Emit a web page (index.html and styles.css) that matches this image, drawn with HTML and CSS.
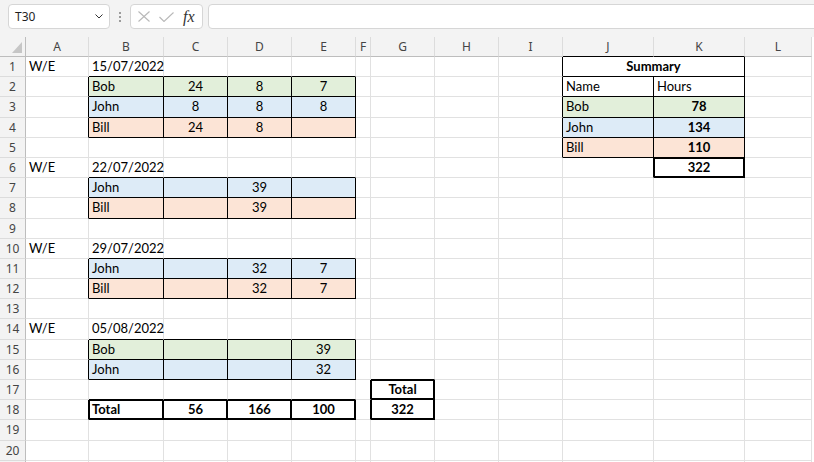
FILE: index.html
```html
<!DOCTYPE html>
<html>
<head>
<meta charset="utf-8">
<link rel="stylesheet" href="styles.css">
</head>
<body>
<div class="toolbar">
  <div class="namebox"><span>T30</span><svg width="8" height="5" viewBox="0 0 8 5"><path d="M0.5 0.5L4 4L7.5 0.5" fill="none" stroke="#333" stroke-width="1"/></svg></div>
  <div class="grip"><i></i><i></i><i></i></div>
  <div class="fxbox">
    <svg class="ix" width="12" height="11" viewBox="0 0 12 11"><path d="M0.5 0.5L11.5 10.5M11.5 0.5L0.5 10.5" fill="none" stroke="#b8b8b8" stroke-width="1.1"/></svg>
    <svg class="iv" width="15" height="10" viewBox="0 0 15 10"><path d="M0.5 5L5 9.5L14.5 0.5" fill="none" stroke="#b8b8b8" stroke-width="1.1"/></svg>
    <span class="fx">fx</span>
  </div>
  <div class="formula"></div>
</div>
<div class="sheet">
  <span class="corner"><svg width="10" height="11" viewBox="0 0 10 11"><polygon points="10,0 10,11 0,11" fill="#c6c6c6"/></svg></span><span class="ch">A</span><span class="ch">B</span><span class="ch">C</span><span class="ch">D</span><span class="ch">E</span><span class="ch">F</span><span class="ch">G</span><span class="ch">H</span><span class="ch">I</span><span class="ch kb">J</span><span class="ch kb">K</span><span class="ch">L</span>

  <span class="rh">1</span><span>W/E</span><span class="d b">15/07/2022</span><span class="b"></span><span class="b"></span><span class="b"></span><span></span><span></span><span></span><span class="r"></span><span class="sum r b n k">Summary</span><span></span>

  <span class="rh">2</span><span class="r"></span><span class="g r b">Bob</span><span class="g r b n">24</span><span class="g r b n">8</span><span class="g r b n">7</span><span></span><span></span><span></span><span class="r"></span><span class="r b">Name</span><span class="r b">Hours</span><span></span>

  <span class="rh">3</span><span class="r"></span><span class="u r b">John</span><span class="u r b n">8</span><span class="u r b n">8</span><span class="u r b n">8</span><span></span><span></span><span></span><span class="r"></span><span class="g r b">Bob</span><span class="g r b n k">78</span><span></span>

  <span class="rh">4</span><span class="r"></span><span class="o r b">Bill</span><span class="o r b n">24</span><span class="o r b n">8</span><span class="o r b"></span><span></span><span></span><span></span><span class="r"></span><span class="u r b">John</span><span class="u r b n k">134</span><span></span>

  <span class="rh">5</span><span></span><span></span><span></span><span></span><span></span><span></span><span></span><span></span><span class="r"></span><span class="o r b">Bill</span><span class="o r b n k">110</span><span></span>

  <span class="rh">6</span><span>W/E</span><span class="d b">22/07/2022</span><span class="b"></span><span class="b"></span><span class="b"></span><span></span><span></span><span></span><span></span><span class="r"></span><span class="t4 r b n k">322</span><span></span>

  <span class="rh">7</span><span class="r"></span><span class="u r b">John</span><span class="u r b"></span><span class="u r b n">39</span><span class="u r b"></span><span></span><span></span><span></span><span></span><span></span><span></span><span></span>

  <span class="rh">8</span><span class="r"></span><span class="o r b">Bill</span><span class="o r b"></span><span class="o r b n">39</span><span class="o r b"></span><span></span><span></span><span></span><span></span><span></span><span></span><span></span>

  <span class="rh">9</span><span></span><span></span><span></span><span></span><span></span><span></span><span></span><span></span><span></span><span></span><span></span><span></span>

  <span class="rh">10</span><span>W/E</span><span class="d b">29/07/2022</span><span class="b"></span><span class="b"></span><span class="b"></span><span></span><span></span><span></span><span></span><span></span><span></span><span></span>

  <span class="rh">11</span><span class="r"></span><span class="u r b">John</span><span class="u r b"></span><span class="u r b n">32</span><span class="u r b n">7</span><span></span><span></span><span></span><span></span><span></span><span></span><span></span>

  <span class="rh">12</span><span class="r"></span><span class="o r b">Bill</span><span class="o r b"></span><span class="o r b n">32</span><span class="o r b n">7</span><span></span><span></span><span></span><span></span><span></span><span></span><span></span>

  <span class="rh">13</span><span></span><span></span><span></span><span></span><span></span><span></span><span></span><span></span><span></span><span></span><span></span><span></span>

  <span class="rh">14</span><span>W/E</span><span class="d b">05/08/2022</span><span class="b"></span><span class="b"></span><span class="b"></span><span></span><span></span><span></span><span></span><span></span><span></span><span></span>

  <span class="rh">15</span><span class="r"></span><span class="g r b">Bob</span><span class="g r b"></span><span class="g r b"></span><span class="g r b n">39</span><span></span><span></span><span></span><span></span><span></span><span></span><span></span>

  <span class="rh">16</span><span class="r"></span><span class="u r b">John</span><span class="u r b"></span><span class="u r b"></span><span class="u r b n">32</span><span></span><span class="b"></span><span></span><span></span><span></span><span></span><span></span>

  <span class="rh">17</span><span></span><span class="b"></span><span class="b"></span><span class="b"></span><span class="b"></span><span class="r"></span><span class="t4 r b n k">Total</span><span></span><span></span><span></span><span></span><span></span>

  <span class="rh">18</span><span class="r"></span><span class="t4 r b k">Total</span><span class="t3 r b n k">56</span><span class="t3 r b n k">166</span><span class="t3 r b n k">100</span><span class="r"></span><span class="tn r b n k">322</span><span></span><span></span><span></span><span></span><span></span>

  <span class="rh">19</span><span></span><span></span><span></span><span></span><span></span><span></span><span></span><span></span><span></span><span></span><span></span><span></span>

  <span class="rh">20</span><span></span><span></span><span></span><span></span><span></span><span></span><span></span><span></span><span></span><span></span><span></span><span></span>

  <span class="rh"></span><span></span><span></span><span></span><span></span><span></span><span></span><span></span><span></span><span></span><span></span><span></span><span></span>
</div>
</body>
</html>
```

FILE: styles.css
```css
* { box-sizing: border-box; }
html, body { margin: 0; padding: 0; background: #fff; }
body {
  width: 814px;
  height: 462px;
  overflow: hidden;
  font-family: Lato, "Liberation Sans", sans-serif;
}

.toolbar {
  display: flex;
  align-items: flex-start;
  height: 37px;
  padding: 4px 0 0 8px;
  background: #f3f3f3;
}
.namebox {
  display: flex;
  align-items: center;
  justify-content: space-between;
  width: 102px;
  height: 25px;
  padding: 0 6px 0 6px;
  background: #fff;
  border: 1px solid #d6d6d6;
  border-radius: 4px;
  font: 12px "Noto Sans", sans-serif;
  color: #1f1f1f;
}
.grip {
  display: flex;
  flex-direction: column;
  align-items: center;
  justify-content: center;
  gap: 2px;
  width: 20px;
  height: 25px;
}
.grip i {
  display: block;
  width: 2px;
  height: 2px;
  background: #9c9c9c;
}
.fxbox {
  display: flex;
  align-items: center;
  width: 73px;
  height: 25px;
  padding-left: 7px;
  background: #fff;
  border: 1px solid #d6d6d6;
  border-radius: 4px;
}
.iv { margin-left: 9px; }
.fx {
  margin-left: 9px;
  font: italic 16px "Liberation Serif", serif;
  color: #333;
  line-height: 16px;
}
.formula {
  flex: 1;
  height: 25px;
  margin-left: 5px;
  margin-right: -10px;
  background: #fff;
  border: 1px solid #d6d6d6;
  border-radius: 4px;
}

.sheet {
  display: grid;
  grid-template-columns: 26px 63px 75px 64px 64px 64px 15px 64px 64px 64px 91px 91px 67px;
  grid-template-rows: 20px;
  grid-auto-rows: 20.2px;
  font-size: 13px;
  line-height: 19px;
  color: #000;
}
.sheet > span {
  border-right: 1px solid #e1e1e1;
  border-bottom: 1px solid #e1e1e1;
  padding: 0 3px;
  white-space: nowrap;
}
.sheet .ch,
.sheet .rh,
.sheet .corner {
  background: #f3f3f3;
  font: 12px/19px "Noto Sans", sans-serif;
  color: #444;
  text-align: center;
  padding: 0;
}
.sheet .ch { border-right-color: #dcdcdc; border-bottom-color: #bdbdbd; }
.sheet .rh { border-right-color: #bdbdbd; border-bottom-color: #dcdcdc; }
.sheet .corner {
  display: flex;
  justify-content: flex-end;
  align-items: flex-end;
  padding: 0 3px 3px 0;
  border-right-color: #bdbdbd;
  border-bottom-color: #bdbdbd;
}
.sheet .kb { border-bottom-color: #000; }

.sheet .sum { grid-column: span 2; }
.sheet .r { border-right-color: #000; }
.sheet .b { border-bottom-color: #000; }
.sheet .n { text-align: center; }
.sheet .d { text-align: right; padding-right: 2px; }
.sheet .k { font-weight: 700; }
.sheet .g { background: #e2efda; }
.sheet .u { background: #ddebf7; }
.sheet .o { background: #fce4d6; }
.sheet .t4 { box-shadow: inset 1px 0 0 #000, inset -1px 0 0 #000, inset 0 1px 0 #000, inset 0 -1px 0 #000; }
.sheet .t3 { box-shadow: inset -1px 0 0 #000, inset 0 1px 0 #000, inset 0 -1px 0 #000; }
.sheet .tn { box-shadow: inset 1px 0 0 #000, inset -1px 0 0 #000, inset 0 -1px 0 #000; }
```
